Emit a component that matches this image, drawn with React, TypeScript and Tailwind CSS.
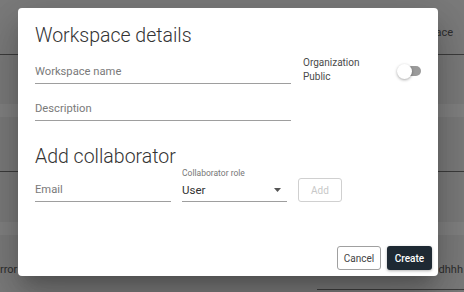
import React from "react";

export default function App() {
  return (
    <div className="relative w-[464px] h-[292px] overflow-hidden bg-[#7b7b7b] font-['Roboto',sans-serif]">
      {/* dimmed page underneath */}
      <div className="flex flex-col">
        <div className="h-[55px] border-b border-[#3c3c3c] flex items-start justify-end pt-[26px] pr-[11px]">
          <span className="text-[11px] leading-[14px] text-[#2e2e2e]">Workspace</span>
        </div>
        <div className="h-[49px]" />
        <div className="h-[13px] bg-[#828282]" />
        <div className="h-[55px] border-b border-[#3c3c3c]" />
        <div className="h-[50px]" />
        <div className="h-[13px] bg-[#828282]" />
        <div className="h-[54px] flex items-end justify-between pb-[12px]">
          <span className="text-[11px] leading-[14px] text-[#2e2e2e]">rror</span>
          <span className="mr-[1px] text-[11px] leading-[14px] text-[#2e2e2e]">dhhh</span>
        </div>
        <div className="ml-[317px] h-[3px] border-t border-[#3c3c3c]" />
      </div>

      {/* dialog */}
      <div className="absolute left-[18px] top-[8px] w-[420px] h-[268px] bg-white rounded-[4px] shadow-[0_11px_15px_-7px_rgba(0,0,0,0.2),0_24px_38px_3px_rgba(0,0,0,0.14),0_9px_46px_8px_rgba(0,0,0,0.12)] flex flex-col px-[17px]">
        <div className="pt-[16px] text-[19.5px] leading-[24px] font-light text-[#333]">Workspace details</div>

        <div className="flex">
          <div className="w-[256px] flex flex-col">
            <div className="mt-[17px] pb-[4px] border-b border-[#9e9e9e] text-[11.2px] leading-[14px] text-[#7a7a7a]">
              Workspace name
            </div>
            <div className="mt-[18px] pb-[4px] border-b border-[#9e9e9e] text-[11.2px] leading-[14px] text-[#7a7a7a]">
              Description
            </div>
          </div>
          <div className="ml-[12px] flex-1 flex justify-between mt-[8px]">
            <div className="text-[10px] leading-[14px] text-[#4a4a4a]">
              Organization
              <br />
              Public
            </div>
            <div className="relative mt-[8px] w-[24px] h-[15px]">
              <div className="absolute left-[7px] top-[2px] w-[17px] h-[10px] rounded-full bg-[#9a9a9a]" />
              <div className="absolute left-0 top-0 w-[15px] h-[15px] rounded-full bg-white shadow-[0_1px_3px_rgba(0,0,0,0.35)]" />
            </div>
          </div>
        </div>

        <div className="mt-[24px] text-[19.5px] leading-[24px] font-light text-[#333]">Add collaborator</div>

        <div className="-mt-[1px] flex items-end">
          <div className="w-[136px] pb-[4px] border-b border-[#9e9e9e] text-[11.2px] leading-[14px] text-[#7a7a7a]">
            Email
          </div>
          <div className="ml-[11px] w-[105px] flex flex-col">
            <div className="text-[8.5px] leading-[10px] text-[#777]">Collaborator role</div>
            <div className="mt-[5px] pb-[4px] border-b border-[#9e9e9e] flex items-center justify-between pr-[6px]">
              <span className="text-[11.5px] leading-[14px] text-[#333]">User</span>
              <svg width="7" height="4" viewBox="0 0 7 4">
                <path d="M0 0 L7 0 L3.5 4 Z" fill="#555" />
              </svg>
            </div>
          </div>
          <button className="ml-[11px] w-[44px] h-[24px] rounded-[3px] border border-[#d0d0d0] text-[10px] text-[#c8c8c8]">
            Add
          </button>
        </div>

        <div className="mt-auto -mr-[11px] pb-[6px] flex justify-end gap-[6px]">
          <button className="w-[44px] h-[24px] rounded-[3px] border border-[#a0a0a0] text-[10px] text-[#444]">
            Cancel
          </button>
          <button className="w-[45px] h-[24px] rounded-[3px] bg-[#1e2933] text-[10px] font-medium text-white shadow-[0_1px_3px_rgba(0,0,0,0.3)]">
            Create
          </button>
        </div>
      </div>
    </div>
  );
}
